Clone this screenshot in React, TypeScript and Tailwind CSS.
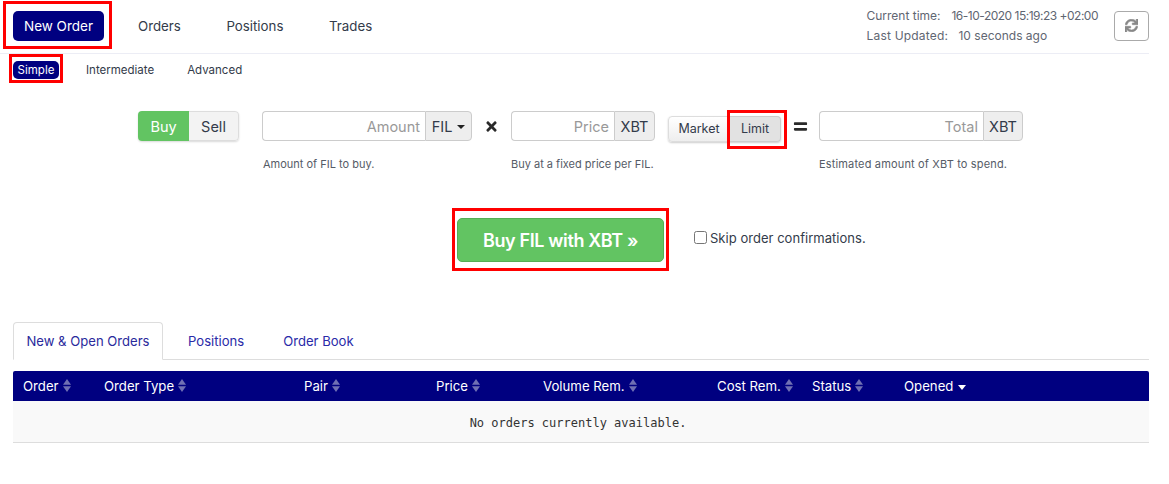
import { FaSync, FaTimes, FaEquals } from "react-icons/fa";

const font = { fontFamily: "Inter, 'Liberation Sans', sans-serif" };

function RedBox({ className }: { className: string }) {
  return <span className={`absolute border-[3px] border-[#ff0000] pointer-events-none ${className}`} />;
}

function Col({ label, width, sorted }: { label: string; width: string; sorted?: boolean }) {
  return (
    <div className={`flex items-center ${width}`}>
      <span className="pt-[2px]">{label}</span>
      {sorted ? (
        <span className="ml-[5px] mt-[3px] w-0 h-0 border-x-[4px] border-x-transparent border-t-[5px] border-t-white" />
      ) : (
        <svg viewBox="0 0 8 13" className="ml-[4px] w-[8px] h-[13px] -mt-[1px]" fill="#6f6fb3">
          <path d="M4 0 8 5.7H0Z" />
          <path d="M0 7.3H8L4 13Z" />
        </svg>
      )}
    </div>
  );
}

function Field({ placeholder, unit, width, unitWidth, caret }: { placeholder: string; unit: string; width: string; unitWidth: string; caret?: boolean }) {
  return (
    <div className="flex h-[30px] text-[14.5px]">
      <div className={`${width} border border-[#cccccc] border-r-0 rounded-l-[4px] bg-white flex items-center justify-end pr-[5px] pt-[1px] text-[#999999]`}>{placeholder}</div>
      <div className={`${unitWidth} border border-[#cccccc] rounded-r-[4px] bg-[#eeeeee] flex items-center justify-center gap-[5px] pt-[1px] text-[#333b4a]`}>
        {unit}
        {caret && <span className="w-0 h-0 border-x-[4px] border-x-transparent border-t-[4px] border-t-[#222222]" />}
      </div>
    </div>
  );
}

export default function App() {
  return (
    <div className="w-[1169px] h-[484px] bg-white overflow-hidden pr-[20px] text-[#333b4a]" style={font}>
      {/* top bar */}
      <div className="flex items-center h-[54px] border-b border-[#ecedf5] pl-[13px] pb-[2px]">
        <div className="relative">
          <button className="block w-[91px] h-[30px] pt-[1px] bg-[#000080] text-white rounded-[5px] text-[13.5px]">New Order</button>
          <RedBox className="-left-[10px] -top-[10px] -right-[8px] -bottom-[8px]" />
        </div>
        <div className="flex text-[13.3px] ml-[34px] gap-[45.5px] pt-[2px]">
          <span>Orders</span>
          <span>Positions</span>
          <span>Trades</span>
        </div>
        <div className="ml-auto flex items-center">
          <div className="text-[12px] text-[#5f6672] leading-[20px] mr-[16px] pt-[1px]">
            <div className="flex"><span className="w-[85px]">Current time:</span><span className="tracking-[-0.5px]">16-10-2020 15:19:23 +02:00</span></div>
            <div className="flex"><span className="w-[92px] tracking-[0.2px]">Last Updated:</span><span>10 seconds ago</span></div>
          </div>
          <button className="w-[35px] h-[30px] border border-[#aaaaaa] rounded-[4px] flex items-center justify-center">
            <FaSync className="w-[13px] h-[13px] text-[#888888]" stroke="currentColor" strokeWidth={24} />
          </button>
        </div>
      </div>

      {/* sub tabs */}
      <div className="flex items-center h-[32px] pl-[13px] text-[11.5px]">
        <div className="relative">
          <span className="block w-[46px] h-[18px] leading-[18px] text-center bg-[#000080] text-white rounded-[5px]">Simple</span>
          <RedBox className="-left-[4px] -top-[7px] -right-[4px] -bottom-[4px]" />
        </div>
        <span className="ml-[27px] pt-[1px]">Intermediate</span>
        <span className="ml-[33px] pt-[1px]">Advanced</span>
      </div>

      {/* order form */}
      <div className="flex items-start pl-[138px] mt-[25px]">
        <div className="flex h-[30px] text-[14.5px] w-[101px] mr-[23px] rounded-[4px] overflow-hidden shadow-[0_1px_2px_rgba(0,0,0,0.15)]">
          <div className="w-[51px] bg-[#62c462] text-white flex items-center justify-center pt-[1px]">Buy</div>
          <div className="flex-1 bg-[#f3f3f3] border border-l-0 border-[#dddddd] rounded-r-[4px] flex items-center justify-center pt-[1px]">Sell</div>
        </div>
        <div className="w-[210px]">
          <Field placeholder="Amount" unit="FIL" width="w-[163px]" unitWidth="w-[47px]" caret />
          <p className="text-[11px] text-[#555b66] mt-[16px] ml-[1px] leading-[14px]">Amount of FIL to buy.</p>
        </div>
        <div className="w-[39px] h-[30px] flex items-center justify-center"><FaTimes className="w-[15px] h-[15px] text-[#2a2a2a]" /></div>
        <div className="w-[144px]">
          <Field placeholder="Price" unit="XBT" width="w-[103px]" unitWidth="w-[41px]" />
          <p className="text-[11px] text-[#555b66] mt-[16px] leading-[14px] whitespace-nowrap">Buy at a fixed price per FIL.</p>
        </div>
        <div className="relative flex h-[26px] mt-[5px] ml-[13px] w-[113px] text-[12.5px] rounded-[4px] shadow-[0_1px_2px_rgba(0,0,0,0.2)]">
          <div className="w-[62px] border border-[#dddddd] rounded-l-[4px] bg-gradient-to-b from-white to-[#eeeeee] flex items-center justify-center pt-[1px]">Market</div>
          <div className="flex-1 border border-l-0 border-[#cccccc] rounded-r-[4px] bg-[#e2e2e2] flex items-center justify-center pt-[1px]">Limit</div>
          <RedBox className="left-[59px] -top-[6px] -right-[6px] -bottom-[7px]" />
        </div>
        <div className="w-[38px] h-[30px] flex items-center justify-center"><FaEquals className="w-[15px] h-[15px] text-[#2a2a2a]" /></div>
        <div className="w-[204px]">
          <Field placeholder="Total" unit="XBT" width="w-[164px]" unitWidth="w-[40px]" />
          <p className="text-[11px] text-[#555b66] mt-[16px] leading-[14px] whitespace-nowrap tracking-[0.16px]">Estimated amount of XBT to spend.</p>
        </div>
      </div>

      {/* submit */}
      <div className="flex items-start pl-[457px] mt-[47px]">
        <div className="relative">
          <button className="block w-[207px] h-[44px] pt-[1px] bg-[#62c462] border border-[#55ad55] rounded-[5px] text-white text-[18px] font-semibold tracking-[-0.37px]">Buy FIL with XBT »</button>
          <RedBox className="-left-[5px] -top-[10px] -right-[5px] -bottom-[9px]" />
        </div>
        <label className="flex items-center ml-[30px] mt-[12px] text-[13px] h-[16px]">
          <input type="checkbox" className="w-[13px] h-[13px] mr-[3px] -mt-[2px]" />
          <span className="pt-[1px] tracking-[0.03px]">Skip order confirmations.</span>
        </label>
      </div>

      {/* tabs */}
      <div className="flex items-end h-[38px] mt-[60px] ml-[13px] border-b border-[#dddddd] text-[13.1px] text-[#2a2aa8]">
        <div className="w-[150px] h-[38px] pt-[2px] border border-[#dddddd] border-b-white -mb-[1px] rounded-t-[4px] flex items-center justify-center text-[#2a2a9c]">New &amp; Open Orders</div>
        <div className="h-[37px] flex items-center ml-[25px] pt-[3px]">Positions</div>
        <div className="h-[37px] flex items-center ml-[39px] pt-[3px]">Order Book</div>
      </div>

      {/* table */}
      <div className="ml-[13px] mt-[11px]">
        <div className="flex items-center h-[30px] bg-[#000080] text-white text-[13.2px] pl-[10px] rounded-t-[2px]">
          <Col label="Order" width="w-[81px]" />
          <Col label="Order Type" width="w-[200px]" />
          <Col label="Pair" width="w-[132px]" />
          <Col label="Price" width="w-[107px]" />
          <Col label="Volume Rem." width="w-[174px]" />
          <Col label="Cost Rem." width="w-[95px]" />
          <Col label="Status" width="w-[92px]" />
          <Col label="Opened" width="w-[100px]" sorted />
        </div>
        <div className="h-[42px] bg-[#f9f9f9] border-b border-[#dddddd] flex items-center justify-center pr-[6px] pt-[3px] text-[12px] text-[#333333]" style={{ fontFamily: "'DejaVu Sans Mono', monospace" }}>
          No orders currently available.
        </div>
      </div>
    </div>
  );
}
